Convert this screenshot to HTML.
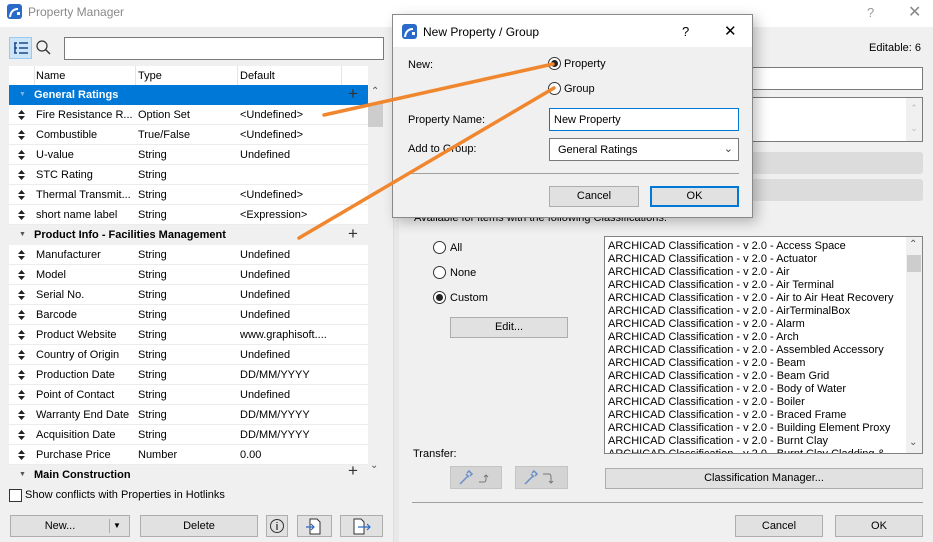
<!DOCTYPE html>
<html><head><meta charset="utf-8"><style>
*{box-sizing:border-box;margin:0;padding:0}
body{width:933px;height:542px;overflow:hidden;background:#f0f0f0;font-family:"Liberation Sans",sans-serif;font-size:11px;color:#000;position:relative}
.a{position:absolute}
.btn{position:absolute;background:#e1e1e1;border:1px solid #adadad;text-align:center;font-size:11px}
.row{position:absolute;left:9px;width:359px;height:20px;background:#fff;border-bottom:1px solid #ececec}
.row span{position:absolute;top:4px}
.row svg{position:absolute;left:9px;top:5px}
.grp{position:absolute;left:9px;width:359px;height:20px;background:#f0f0f0;font-weight:bold}
.grp span{position:absolute;top:4px}
.cl{position:absolute;left:608px;font-size:11px;white-space:nowrap}
.radio{position:absolute;width:13px;height:13px;border:1px solid #333;border-radius:50%;background:#fff}
.radio.on::after{content:"";position:absolute;left:2px;top:2px;width:7px;height:7px;border-radius:50%;background:#222}
</style></head><body>
<div class="a" style="left:0;top:0;width:933px;height:27px;background:#fff"></div>
<div class="a" style="left:7px;top:4px;width:15px;height:15px;background:#2a6ac8;border-radius:3px"></div>
<svg class="a" style="left:7px;top:4px" width="15" height="15"><path d="M3 13 Q4 5 11 5" stroke="#fff" stroke-width="2" fill="none"/><rect x="10" y="8" width="3" height="3" fill="#fff"/></svg>
<div class="a" style="left:28px;top:5px;font-size:12px;color:#888">Property Manager</div>
<div class="a" style="left:867px;top:5px;font-size:13px;color:#999">?</div>
<div class="a" style="left:908px;top:2px;font-size:16px;color:#888">✕</div>
<div class="a" style="left:393px;top:27px;width:6px;height:515px;background:#e8e8e8;border-left:1px solid #ddd"></div>
<div class="a" style="left:9px;top:37px;width:23px;height:22px;background:#cce4f7;border:1px solid #99c9ef"></div>
<svg class="a" style="left:12px;top:40px" width="18" height="16"><g stroke="#1c4a8a" stroke-width="1.5"><path d="M2 3h3M2 8h3M2 13h3M3 3v10M7 3h9M7 8h9M7 13h9"/></g></svg>
<svg class="a" style="left:35px;top:39px" width="16" height="16"><circle cx="7" cy="7" r="5" stroke="#333" stroke-width="1.2" fill="none"/><path d="M10.5 10.5L15 15" stroke="#333" stroke-width="1.4"/></svg>
<div class="a" style="left:64px;top:37px;width:320px;height:23px;background:#fff;border:1px solid #7a7a7a"></div>
<div class="a" style="left:9px;top:66px;width:359px;height:19px;background:#fff"></div>
<div class="a" style="left:34px;top:66px;width:1px;height:19px;background:#e5e5e5"></div>
<div class="a" style="left:135px;top:66px;width:1px;height:19px;background:#e5e5e5"></div>
<div class="a" style="left:237px;top:66px;width:1px;height:19px;background:#e5e5e5"></div>
<div class="a" style="left:341px;top:66px;width:1px;height:19px;background:#e5e5e5"></div>
<div class="a" style="left:36px;top:70px">Name</div>
<div class="a" style="left:138px;top:70px">Type</div>
<div class="a" style="left:240px;top:70px">Default</div>
<div class="a" style="left:368px;top:85px;width:15px;height:395px;background:#f0f0f0"></div>
<div class="a" style="left:368px;top:103px;width:15px;height:24px;background:#cdcdcd"></div>
<div class="a" style="left:371px;top:86px;font-size:10px;color:#555">⌃</div>
<div class="a" style="left:370px;top:460px;font-size:10px;color:#555">⌄</div>
<div class="grp" style="top:85px;background:#0078d7;color:#fff"><span style="left:10px;font-size:7px;top:6px;color:#7fb2e0">▼</span><span style="left:25px">General Ratings</span><span style="left:339px;top:-1px;font-size:17px;font-weight:normal;color:#333">+</span></div>
<div class="row" style="top:105px"><svg width="7" height="10"><path d="M0 4L3.5 0L7 4zM0 6L3.5 10L7 6z" fill="#222"/></svg><span style="left:27px">Fire Resistance R...</span><span style="left:129px">Option Set</span><span style="left:231px">&lt;Undefined&gt;</span></div>
<div class="row" style="top:125px"><svg width="7" height="10"><path d="M0 4L3.5 0L7 4zM0 6L3.5 10L7 6z" fill="#222"/></svg><span style="left:27px">Combustible</span><span style="left:129px">True/False</span><span style="left:231px">&lt;Undefined&gt;</span></div>
<div class="row" style="top:145px"><svg width="7" height="10"><path d="M0 4L3.5 0L7 4zM0 6L3.5 10L7 6z" fill="#222"/></svg><span style="left:27px">U-value</span><span style="left:129px">String</span><span style="left:231px">Undefined</span></div>
<div class="row" style="top:165px"><svg width="7" height="10"><path d="M0 4L3.5 0L7 4zM0 6L3.5 10L7 6z" fill="#222"/></svg><span style="left:27px">STC Rating</span><span style="left:129px">String</span></div>
<div class="row" style="top:185px"><svg width="7" height="10"><path d="M0 4L3.5 0L7 4zM0 6L3.5 10L7 6z" fill="#222"/></svg><span style="left:27px">Thermal Transmit...</span><span style="left:129px">String</span><span style="left:231px">&lt;Undefined&gt;</span></div>
<div class="row" style="top:205px"><svg width="7" height="10"><path d="M0 4L3.5 0L7 4zM0 6L3.5 10L7 6z" fill="#222"/></svg><span style="left:27px">short name label</span><span style="left:129px">String</span><span style="left:231px">&lt;Expression&gt;</span></div>
<div class="grp" style="top:225px"><span style="left:10px;font-size:7px;top:6px;color:#555">▼</span><span style="left:25px">Product Info - Facilities Management</span><span style="left:339px;top:-1px;font-size:17px;font-weight:normal;color:#333">+</span></div>
<div class="row" style="top:245px"><svg width="7" height="10"><path d="M0 4L3.5 0L7 4zM0 6L3.5 10L7 6z" fill="#222"/></svg><span style="left:27px">Manufacturer</span><span style="left:129px">String</span><span style="left:231px">Undefined</span></div>
<div class="row" style="top:265px"><svg width="7" height="10"><path d="M0 4L3.5 0L7 4zM0 6L3.5 10L7 6z" fill="#222"/></svg><span style="left:27px">Model</span><span style="left:129px">String</span><span style="left:231px">Undefined</span></div>
<div class="row" style="top:285px"><svg width="7" height="10"><path d="M0 4L3.5 0L7 4zM0 6L3.5 10L7 6z" fill="#222"/></svg><span style="left:27px">Serial No.</span><span style="left:129px">String</span><span style="left:231px">Undefined</span></div>
<div class="row" style="top:305px"><svg width="7" height="10"><path d="M0 4L3.5 0L7 4zM0 6L3.5 10L7 6z" fill="#222"/></svg><span style="left:27px">Barcode</span><span style="left:129px">String</span><span style="left:231px">Undefined</span></div>
<div class="row" style="top:325px"><svg width="7" height="10"><path d="M0 4L3.5 0L7 4zM0 6L3.5 10L7 6z" fill="#222"/></svg><span style="left:27px">Product Website</span><span style="left:129px">String</span><span style="left:231px">www.graphisoft....</span></div>
<div class="row" style="top:345px"><svg width="7" height="10"><path d="M0 4L3.5 0L7 4zM0 6L3.5 10L7 6z" fill="#222"/></svg><span style="left:27px">Country of Origin</span><span style="left:129px">String</span><span style="left:231px">Undefined</span></div>
<div class="row" style="top:365px"><svg width="7" height="10"><path d="M0 4L3.5 0L7 4zM0 6L3.5 10L7 6z" fill="#222"/></svg><span style="left:27px">Production Date</span><span style="left:129px">String</span><span style="left:231px">DD/MM/YYYY</span></div>
<div class="row" style="top:385px"><svg width="7" height="10"><path d="M0 4L3.5 0L7 4zM0 6L3.5 10L7 6z" fill="#222"/></svg><span style="left:27px">Point of Contact</span><span style="left:129px">String</span><span style="left:231px">Undefined</span></div>
<div class="row" style="top:405px"><svg width="7" height="10"><path d="M0 4L3.5 0L7 4zM0 6L3.5 10L7 6z" fill="#222"/></svg><span style="left:27px">Warranty End Date</span><span style="left:129px">String</span><span style="left:231px">DD/MM/YYYY</span></div>
<div class="row" style="top:425px"><svg width="7" height="10"><path d="M0 4L3.5 0L7 4zM0 6L3.5 10L7 6z" fill="#222"/></svg><span style="left:27px">Acquisition Date</span><span style="left:129px">String</span><span style="left:231px">DD/MM/YYYY</span></div>
<div class="row" style="top:445px"><svg width="7" height="10"><path d="M0 4L3.5 0L7 4zM0 6L3.5 10L7 6z" fill="#222"/></svg><span style="left:27px">Purchase Price</span><span style="left:129px">Number</span><span style="left:231px">0.00</span></div>
<div class="grp" style="top:465px;height:15px;overflow:hidden"><span style="left:10px;font-size:7px;top:6px;color:#555">▼</span><span style="left:25px">Main Construction</span><span style="left:339px;top:-4px;font-size:17px;font-weight:normal;color:#333">+</span></div>
<div class="a" style="left:9px;top:489px;width:13px;height:13px;border:1px solid #333;background:#fff"></div>
<div class="a" style="left:25px;top:489px">Show conflicts with Properties in Hotlinks</div>
<div class="btn" style="left:10px;top:515px;width:120px;height:22px;line-height:20px"><span style="position:absolute;left:0;width:98px">New...</span><span style="position:absolute;left:98px;top:3px;width:1px;height:14px;background:#adadad"></span><span style="position:absolute;left:102px;font-size:8px">▼</span></div>
<div class="btn" style="left:140px;top:515px;width:118px;height:22px;line-height:20px">Delete</div>
<div class="btn" style="left:266px;top:515px;width:22px;height:22px"><svg width="20" height="20"><circle cx="10" cy="10" r="6.5" stroke="#333" fill="none"/><path d="M10 8v6M10 6v1" stroke="#333" stroke-width="1.3"/></svg></div>
<div class="btn" style="left:297px;top:515px;width:35px;height:22px"><svg width="33" height="20"><path d="M12 3h7l3 3v12h-10z" stroke="#333" fill="#fff"/><path d="M8 11h8M13 8l3 3-3 3" stroke="#2a6ac8" fill="none" stroke-width="1.2"/></svg></div>
<div class="btn" style="left:340px;top:515px;width:43px;height:22px"><svg width="41" height="20"><path d="M13 3h7l3 3v12h-10z" stroke="#333" fill="#fff"/><path d="M17 11h12M26 8l3 3-3 3" stroke="#2a6ac8" fill="none" stroke-width="1.2"/></svg></div>
<div class="a" style="left:869px;top:42px">Editable: 6</div>
<div class="a" style="left:740px;top:67px;width:183px;height:23px;background:#fff;border:1px solid #7a7a7a"></div>
<div class="a" style="left:740px;top:97px;width:183px;height:45px;background:#fff;border:1px solid #7a7a7a"></div>
<div class="a" style="left:906px;top:98px;width:16px;height:43px;background:#f0f0f0;color:#bbb;font-size:9px;text-align:center;line-height:20px">⌃<br>⌄</div>
<div class="a" style="left:740px;top:152px;width:183px;height:22px;background:#dcdcdc;border-radius:3px"></div>
<div class="a" style="left:740px;top:179px;width:183px;height:22px;background:#dcdcdc;border-radius:3px"></div>
<div class="a" style="left:414px;top:212px">Available for items with the following Classifications:</div>
<div class="radio" style="left:433px;top:241px"></div><div class="a" style="left:450px;top:242px">All</div>
<div class="radio" style="left:433px;top:266px"></div><div class="a" style="left:450px;top:267px">None</div>
<div class="radio on" style="left:433px;top:291px"></div><div class="a" style="left:450px;top:292px">Custom</div>
<div class="btn" style="left:450px;top:317px;width:118px;height:21px;line-height:19px">Edit...</div>
<div class="a" style="left:604px;top:236px;width:319px;height:218px;background:#fff;border:1px solid #828282;overflow:hidden">
<div class="a" style="left:301px;top:0;width:16px;height:216px;background:#f0f0f0"></div>
<div class="a" style="left:302px;top:18px;width:14px;height:17px;background:#cdcdcd"></div>
<div class="a" style="left:304px;top:2px;font-size:10px;color:#555">⌃</div>
<div class="a" style="left:304px;top:200px;font-size:10px;color:#555">⌄</div>
</div>
<div class="cl" style="top:240px">ARCHICAD Classification - v 2.0 - Access Space</div>
<div class="cl" style="top:253px">ARCHICAD Classification - v 2.0 - Actuator</div>
<div class="cl" style="top:266px">ARCHICAD Classification - v 2.0 - Air</div>
<div class="cl" style="top:279px">ARCHICAD Classification - v 2.0 - Air Terminal</div>
<div class="cl" style="top:292px">ARCHICAD Classification - v 2.0 - Air to Air Heat Recovery</div>
<div class="cl" style="top:305px">ARCHICAD Classification - v 2.0 - AirTerminalBox</div>
<div class="cl" style="top:318px">ARCHICAD Classification - v 2.0 - Alarm</div>
<div class="cl" style="top:331px">ARCHICAD Classification - v 2.0 - Arch</div>
<div class="cl" style="top:344px">ARCHICAD Classification - v 2.0 - Assembled Accessory</div>
<div class="cl" style="top:357px">ARCHICAD Classification - v 2.0 - Beam</div>
<div class="cl" style="top:370px">ARCHICAD Classification - v 2.0 - Beam Grid</div>
<div class="cl" style="top:383px">ARCHICAD Classification - v 2.0 - Body of Water</div>
<div class="cl" style="top:396px">ARCHICAD Classification - v 2.0 - Boiler</div>
<div class="cl" style="top:409px">ARCHICAD Classification - v 2.0 - Braced Frame</div>
<div class="cl" style="top:422px">ARCHICAD Classification - v 2.0 - Building Element Proxy</div>
<div class="cl" style="top:435px">ARCHICAD Classification - v 2.0 - Burnt Clay</div>
<div class="a" style="left:605px;top:448px;width:300px;height:5px;overflow:hidden"><div style="position:absolute;left:3px;top:0;white-space:nowrap">ARCHICAD Classification - v 2.0 - Burnt Clay Cladding &amp;</div></div>
<div class="a" style="left:413px;top:448px">Transfer:</div>
<div class="a" style="left:450px;top:466px;width:52px;height:23px;background:#d4d4d4;border:1px solid #c4c4c4"><svg width="50" height="21"><path d="M9 17l8-8M15 7l3 3M16 6l2-2 3 3-2 2" stroke="#6a8ec8" stroke-width="1.5" fill="none"/><path d="M28 15h5q2 0 2-3v-4M33 10l2-2 2 2" stroke="#777" fill="none"/></svg></div>
<div class="a" style="left:515px;top:466px;width:53px;height:23px;background:#d4d4d4;border:1px solid #c4c4c4"><svg width="50" height="21"><path d="M9 17l8-8M15 7l3 3M16 6l2-2 3 3-2 2" stroke="#6a8ec8" stroke-width="1.5" fill="none"/><path d="M27 7h6q2 0 2 3v6M33 14l2 2 2-2" stroke="#777" fill="none"/></svg></div>
<div class="btn" style="left:605px;top:468px;width:318px;height:21px;line-height:19px">Classification Manager...</div>
<div class="a" style="left:412px;top:502px;width:511px;height:1px;background:#a0a0a0"></div>
<div class="btn" style="left:735px;top:515px;width:88px;height:22px;line-height:20px">Cancel</div>
<div class="btn" style="left:835px;top:515px;width:88px;height:22px;line-height:20px">OK</div>
<div class="a" style="left:392px;top:14px;width:361px;height:204px;background:#f0f0f0;border:1px solid #888;box-shadow:4px 4px 12px rgba(0,0,0,0.25)">
<div class="a" style="left:0;top:0;width:359px;height:32px;background:#fff"></div>
<div class="a" style="left:9px;top:9px;width:15px;height:15px;background:#2a6ac8;border-radius:3px"></div>
<svg class="a" style="left:9px;top:9px" width="15" height="15"><path d="M3 13 Q4 5 11 5" stroke="#fff" stroke-width="2" fill="none"/><rect x="10" y="8" width="3" height="3" fill="#fff"/></svg>
<div class="a" style="left:30px;top:10px;font-size:12px">New Property / Group</div>
<div class="a" style="left:289px;top:9px;font-size:13px">?</div>
<div class="a" style="left:331px;top:7px;font-size:15px">✕</div>
<div class="a" style="left:15px;top:44px">New:</div>
<div class="radio on" style="left:155px;top:42px"></div><div class="a" style="left:171px;top:43px">Property</div>
<div class="radio" style="left:155px;top:67px"></div><div class="a" style="left:171px;top:68px">Group</div>
<div class="a" style="left:15px;top:99px">Property Name:</div>
<div class="a" style="left:156px;top:93px;width:190px;height:23px;background:#fff;border:1px solid #0078d7;padding:5px 4px">New Property</div>
<div class="a" style="left:15px;top:128px">Add to Group:</div>
<div class="a" style="left:156px;top:123px;width:190px;height:23px;background:#fff;border:1px solid #7a7a7a;padding:5px 8px">General Ratings<span style="position:absolute;right:5px;top:3px;font-size:11px;color:#444">⌄</span></div>
<div class="a" style="left:15px;top:158px;width:331px;height:1px;background:#a0a0a0"></div>
<div class="btn" style="left:156px;top:171px;width:90px;height:21px;line-height:19px">Cancel</div>
<div class="btn" style="left:257px;top:171px;width:89px;height:21px;line-height:17px;border:2px solid #0078d7">OK</div>
</div>
<svg class="a" style="left:0;top:0" width="933" height="542"><g stroke="#f0862e" stroke-width="3.5" stroke-linecap="round"><path d="M324 115L553 64"/><path d="M299 238L554 88"/></g></svg>
</body></html>
